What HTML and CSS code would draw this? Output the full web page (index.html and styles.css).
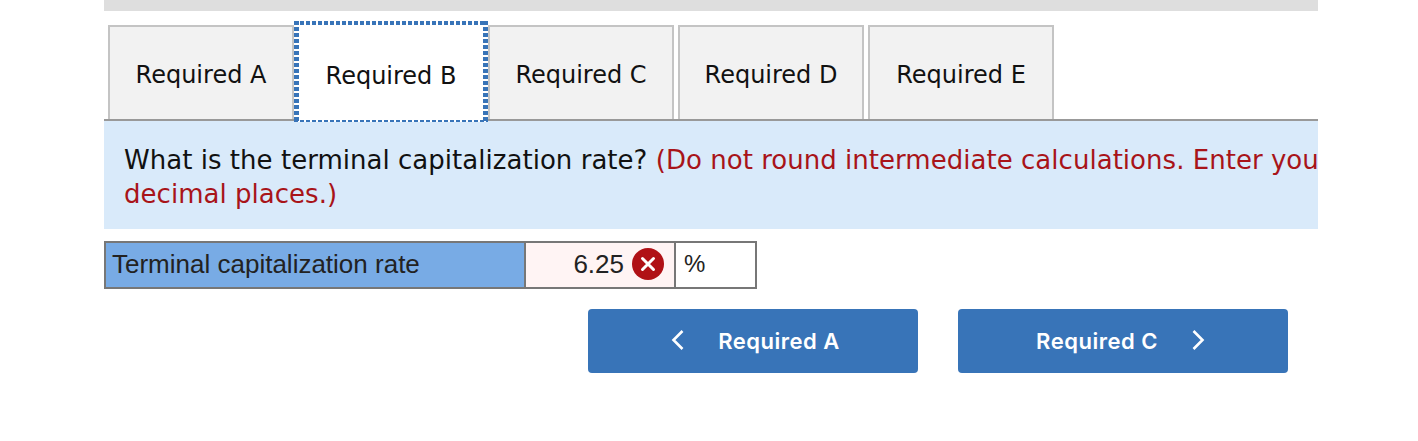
FILE: index.html
```html
<!DOCTYPE html>
<html lang="en">
<head>
    <meta charset="UTF-8">
    <title>Required B</title>
    <link rel="stylesheet" href="styles.css">
</head>
<body>
    <div class="container">
        <div class="top-bar"></div>

        <div class="tabs">
            <div class="tab">Required A</div>
            <div class="tab active">Required B</div>
            <div class="tab">Required C</div>
            <div class="tab tab-d">Required D</div>
            <div class="tab tab-e">Required E</div>
        </div>

        <div class="question">
            <div class="question-text">What is the terminal capitalization rate? <span class="note">(Do not round intermediate calculations. Enter your answer as a percent rounded to 2 decimal places.)</span></div>
        </div>

        <div class="answer-table">
            <div class="cell label">Terminal capitalization rate</div>
            <div class="cell value">
                <span>6.25</span>
                <svg class="wrong" viewBox="0 0 32 32" width="32" height="32">
                    <circle cx="16" cy="16" r="16" fill="#b01116"/>
                    <path d="M10.5 10.5 L21.5 21.5 M21.5 10.5 L10.5 21.5" stroke="#fff" stroke-width="3" stroke-linecap="round"/>
                </svg>
            </div>
            <div class="cell unit">%</div>
        </div>

        <div class="nav">
            <button class="button prev">
                <svg class="chevron" viewBox="0 0 14 24" width="14" height="24"><path d="M11.5 2 L2.5 11 L11.5 20" fill="none" stroke="#fff" stroke-width="2.6"/></svg>
                Required A
            </button>
            <button class="button next">
                Required C
                <svg class="chevron" viewBox="0 0 14 24" width="14" height="24"><path d="M2.5 2 L11.5 11 L2.5 20" fill="none" stroke="#fff" stroke-width="2.6"/></svg>
            </button>
        </div>
    </div>
</body>
</html>
```

FILE: styles.css
```css
body {
    margin: 0;
    background: white;
    font-family: "DejaVu Sans", Verdana, sans-serif;
}
.container {
    width: 1214px;
    margin-left: 104px;
    overflow: hidden;
}
.top-bar {
    height: 11px;
    background-color: #dedede;
}
.tabs {
    display: flex;
    align-items: flex-end;
    height: 110px;
    padding-left: 4px;
    box-sizing: border-box;
    border-bottom: 2px solid #999;
}
.tab {
    width: 186px;
    height: 94px;
    box-sizing: border-box;
    border: 2px solid #c4c4c4;
    border-bottom: none;
    background-color: #f2f2f2;
    color: #111;
    font-size: 24px;
    display: flex;
    align-items: center;
    justify-content: center;
    padding-top: 4px;
}
.tab.active {
    position: relative;
    z-index: 1;
    width: 194px;
    height: 101px;
    margin-bottom: -3px;
    border: none;
    padding: 9px 0 0;
    background:
        linear-gradient(90deg, #3874b8 4px, transparent 4px) 0 0 / 6px 4px repeat-x,
        linear-gradient(90deg, #3874b8 4px, transparent 4px) 0 100% / 6px 2px repeat-x,
        linear-gradient(#3874b8 4px, transparent 4px) 0 0 / 5px 6px repeat-y,
        linear-gradient(#3874b8 4px, transparent 4px) 100% 0 / 5px 6px repeat-y,
        white;
}
.tab-d, .tab-e { margin-left: 4px; }
.question {
    background-color: #d9eafa;
    height: 108px;
    padding: 22px 0 0 20px;
    box-sizing: border-box;
}
.question-text {
    width: 1700px;
    font-size: 26px;
    line-height: 34px;
    letter-spacing: 0.03px;
    color: #111;
}
.note { color: #a81419; }
.answer-table {
    display: flex;
    width: 653px;
    height: 48px;
    box-sizing: border-box;
    margin-top: 12px;
    border: 2px solid #777;
    font-family: "Liberation Sans", Arial, sans-serif;
    font-size: 26px;
    color: #222;
}
.cell {
    display: flex;
    align-items: center;
    box-sizing: border-box;
    padding-bottom: 2px;
}
.label {
    width: 418px;
    padding-left: 6px;
    background-color: #78abe5;
}
.value {
    width: 152px;
    justify-content: flex-end;
    gap: 8px;
    padding-right: 10px;
    background-color: #fff4f4;
    border-left: 2px solid #777;
    border-right: 2px solid #777;
}
.unit {
    flex: 1;
    padding-left: 8px;
    font-size: 24px;
}
.nav {
    display: flex;
    gap: 40px;
    margin: 20px 0 0 484px;
}
.button {
    display: flex;
    align-items: center;
    justify-content: center;
    gap: 33px;
    width: 330px;
    height: 64px;
    border: none;
    border-radius: 4px;
    background-color: #3874b8;
    color: white;
    font-family: Inter, sans-serif;
    font-size: 22px;
    font-weight: 600;
    letter-spacing: 0.5px;
}
.prev { padding-left: 11px; }
.next { padding-right: 11px; }
```
